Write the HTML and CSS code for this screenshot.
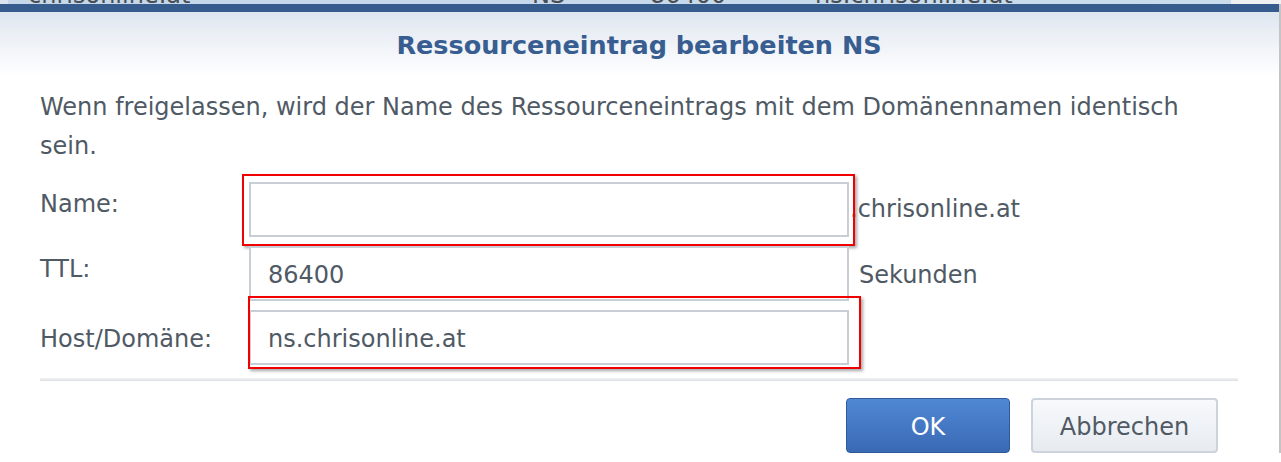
FILE: index.html
```html
<!DOCTYPE html>
<html lang="de">
<head>
<meta charset="utf-8">
<title>Ressourceneintrag bearbeiten NS</title>
<link rel="stylesheet" href="styles.css">
</head>
<body>
<div class="page">
  <div class="grid-strip">
    <div class="grid-row">
      <span class="cell c1">chrisonline.at</span>
      <span class="cell c2">NS</span>
      <span class="cell c3">86400</span>
      <span class="cell c4">ns.chrisonline.at</span>
    </div>
  </div>
  <div class="dialog">
    <div class="dialog-bar"></div>
    <div class="dialog-body">
      <div class="dialog-title">Ressourceneintrag bearbeiten NS</div>
      <p class="desc">Wenn freigelassen, wird der Name des Ressourceneintrags mit dem Domänennamen identisch sein.</p>
      <div class="form">
        <div class="row row-name">
          <label class="lbl">Name:</label>
          <input class="field" type="text" value="">
          <span class="suffix suffix-tight">.chrisonline.at</span>
          <div class="mark mark-name"></div>
        </div>
        <div class="row row-ttl">
          <label class="lbl">TTL:</label>
          <input class="field" type="text" value="86400">
          <span class="suffix">Sekunden</span>
        </div>
        <div class="row row-host">
          <label class="lbl">Host/Domäne:</label>
          <input class="field" type="text" value="ns.chrisonline.at">
          <div class="mark mark-host"></div>
        </div>
      </div>
      <div class="separator"></div>
      <div class="footer">
        <button class="btn btn-primary">OK</button>
        <button class="btn btn-secondary">Abbrechen</button>
      </div>
    </div>
  </div>
</div>
</body>
</html>
```

FILE: styles.css
```css
html, body {
  margin: 0;
  padding: 0;
  background: #ffffff;
  overflow: hidden;
}

.page {
  width: 1281px;
  height: 462px;
  overflow: hidden;
  font-family: "DejaVu Sans", Verdana, sans-serif;
  color: #4f5a65;
}

/* table row peeking out above the dialog */
.grid-strip {
  height: 4px;
  overflow: hidden;
  background: linear-gradient(to right, #dbe5ee 0, #dbe5ee 8px, #c4d8ea 8px, #c9dcec 1231px, #eef0f2 1231px);
}

.grid-row {
  display: grid;
  grid-template-columns: 504px 118px 165px 1fr;
  padding-left: 28px;
  margin-top: -19px;
  font-size: 24px;
  line-height: 28px;
  color: #4a4f55;
  white-space: nowrap;
}

.dialog {
  width: 1279px;
  box-shadow: 2px 0 0 #c4c4c4;
  background: #ffffff;
}

.dialog-bar {
  height: 8px;
  background: #365b8d;
}

.dialog-body {
  background: linear-gradient(to bottom, #dfe6f0 0, #ffffff 64px) no-repeat;
  padding: 0 41px 0 40px;
}

.dialog-title {
  padding-top: 18px;
  line-height: 30px;
  font-size: 25.5px;
  font-weight: bold;
  text-align: center;
  color: #385d90;
}

.desc {
  margin: 28px 0 0;
  font-size: 24px;
  line-height: 39px;
}

.form {
  margin-top: 16px;
}

.row {
  position: relative;
  display: flex;
  align-items: flex-start;
  height: 55px;
  margin-bottom: 9px;
}

.row-host {
  margin-bottom: 0;
}

.lbl {
  width: 209px;
  flex: none;
  font-size: 24px;
  line-height: 38px;
}

.row-name .lbl { padding-top: 3px; }
.row-ttl .lbl { padding-top: 4px; }
.row-host .lbl { padding-top: 10px; }

.field {
  box-sizing: border-box;
  width: 600px;
  height: 55px;
  flex: none;
  margin: 0;
  border: 2px solid #c8ced6;
  border-radius: 0;
  padding: 2px 17px 0;
  font-family: "DejaVu Sans", Verdana, sans-serif;
  font-size: 24px;
  color: #4f5a65;
  background: #ffffff;
  outline: none;
}

.suffix {
  margin-left: 10px;
  font-size: 24px;
  line-height: 58px;
}

.suffix-tight {
  margin-left: 1px;
  line-height: 54px;
}

/* red annotation frames drawn over the fields */
.mark {
  position: absolute;
  box-sizing: border-box;
  border: 2px solid #f00000;
  box-shadow: 2px 2px 3px rgba(0, 0, 0, 0.35);
  pointer-events: none;
}

.mark-name {
  left: 202px;
  top: -8px;
  width: 613px;
  height: 72px;
}

.mark-host {
  left: 208px;
  top: -14px;
  width: 613px;
  height: 73px;
}

.separator {
  margin-top: 13px;
  height: 3px;
  background: linear-gradient(to bottom, #f3f4f5, #dcdee1);
}

.footer {
  display: flex;
  justify-content: flex-end;
  gap: 21px;
  padding: 17px 20px 0 0;
}

.btn {
  box-sizing: border-box;
  height: 55px;
  border-radius: 4px;
  font-family: "DejaVu Sans", Verdana, sans-serif;
  font-size: 24px;
  padding: 3px 0 0;
  cursor: pointer;
}

.btn-primary {
  width: 164px;
  color: #ffffff;
  border: 1px solid #2f5a9a;
  background: linear-gradient(to bottom, #5088d4, #3a69b4);
}

.btn-secondary {
  width: 187px;
  color: #4f5a65;
  border: 2px solid #ccd3dc;
  background: linear-gradient(to bottom, #f7f9fc, #e7ebf0);
}
```
